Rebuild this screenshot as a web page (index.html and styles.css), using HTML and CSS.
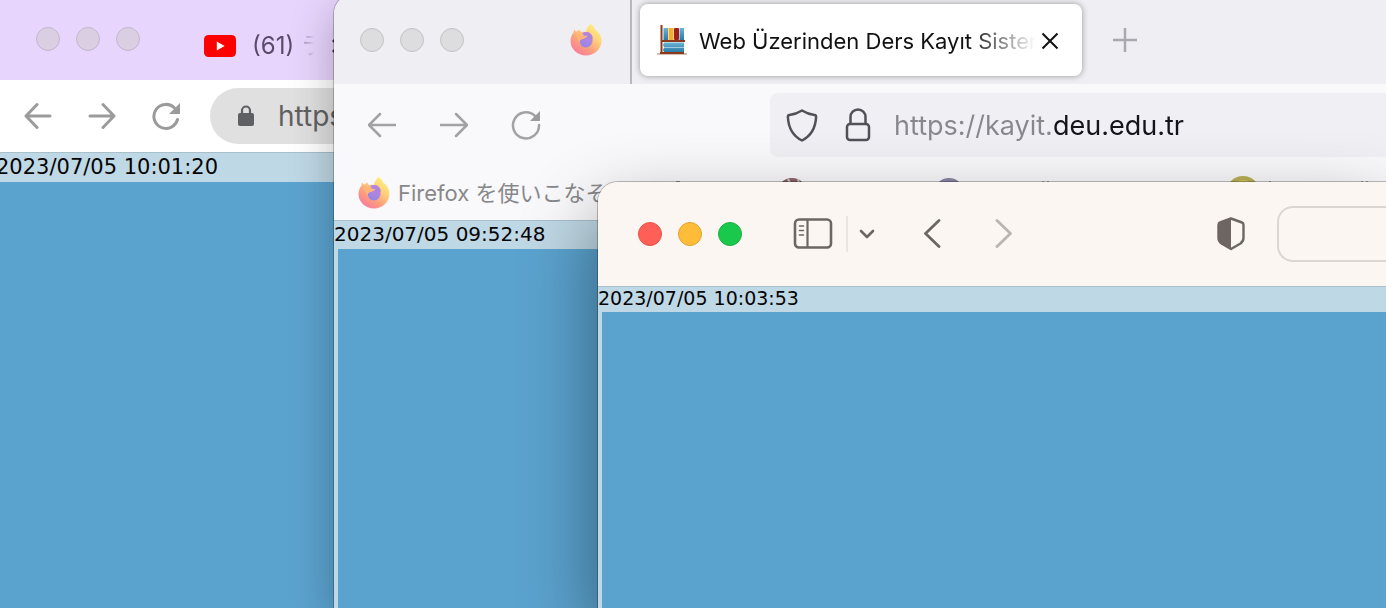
FILE: index.html
```html
<!DOCTYPE html>
<html lang="tr">
<head>
<meta charset="utf-8">
<title>Web Üzerinden Ders Kayıt Sistemi</title>
<link rel="stylesheet" href="styles.css">
</head>
<body>
<svg class="defs" aria-hidden="true">
  <defs>
    <linearGradient id="fox-body" x1="0.85" y1="0.05" x2="0.2" y2="0.95">
      <stop offset="0" stop-color="#fff27a"/>
      <stop offset="0.35" stop-color="#ffd07c"/>
      <stop offset="0.65" stop-color="#fda27c"/>
      <stop offset="1" stop-color="#f77a9c"/>
    </linearGradient>
    <linearGradient id="fox-globe" x1="0.7" y1="0" x2="0.3" y2="1">
      <stop offset="0" stop-color="#c483dd"/>
      <stop offset="1" stop-color="#8f87e4"/>
    </linearGradient>
    <linearGradient id="book-blue" x1="0" y1="0" x2="0" y2="1">
      <stop offset="0" stop-color="#6bb4d4"/>
      <stop offset="1" stop-color="#2b7ba6"/>
    </linearGradient>
    <symbol id="firefox" viewBox="0 0 32 32">
      <path fill="url(#fox-body)" d="M20.500 0c3 1.600 4 4 4.500 5.500 4 2.500 6.500 6.500 6.500 11C31.500 25 24.500 31.500 16 31.500S.5 25 .5 17c0-3.500 1.300-6.500 3-8.500.1-1.300.4-2.300 1-3 .6 1.300 1.200 1.900 1.800 2.200C7.500 6.800 8.500 6 9.500 5.600c.1 1 .6 1.800 1.500 2.400 1.500-.4 3.200-.4 4.800.1.600-3.100 2.300-5.900 4.700-8.100z"/>
      <circle fill="url(#fox-globe)" cx="16" cy="17" r="6.500"/>
      <path fill="url(#fox-globe)" d="M12 9.500c2.500-2 6.500-1.800 8.500 0 1.800 1.600 2.500 3.500 2 6l-5-2z"/>
      <path fill="#ffb678" d="M6 10.500c2.500-1 4.500-.6 6.500.8 1.500.6 3.200.7 5 .8-.4 1.400-2.300 1.900-3.300 2.400-.8.600-2.200.4-3.400 1.200-.8.600-1.400 1.600-1.400 3z"/>
    </symbol>
  </defs>
</svg>
<main class="desktop">

  <section class="window chrome" aria-label="Chrome">
    <header class="chrome-tabs">
      <div class="lights"><button class="light" aria-label="Close"></button><button class="light" aria-label="Minimize"></button><button class="light" aria-label="Zoom"></button></div>
      <div class="chrome-tab">
        <svg class="youtube" viewBox="0 0 32 22"><rect width="32" height="22" rx="4.500" fill="#f00"/><path d="M12.800 6.500v9l7.800-4.500z" fill="#fff"/></svg>
        <span class="chrome-title">(61) ラ</span>
        <button class="chrome-close" aria-label="Close tab"><svg width="14" height="14" viewBox="0 0 14 14"><path d="M1 1l12 12M13 1L1 13"/></svg></button>
      </div>
    </header>
    <nav class="chrome-toolbar">
      <button class="nav" aria-label="Back"><svg width="28" height="28" viewBox="0 0 28 28"><path d="M26 14H2M13 2.500L2 14l11 11.500"/></svg></button>
      <button class="nav" aria-label="Forward"><svg width="28" height="28" viewBox="0 0 28 28"><path d="M2 14h24M15 2.500L26 14 15 25.500"/></svg></button>
      <button class="nav" aria-label="Reload"><svg width="28" height="28" viewBox="0 0 28 28"><path d="M25.500 17.500A12 12 0 1 1 22.500 6"/><path class="fill" d="M28 1v11H17z"/></svg></button>
      <label class="omnibox">
        <svg width="16" height="22" viewBox="0 0 16 22"><path d="M4 9V5.500a4 4 0 0 1 8 0V9" fill="none" stroke="#5f6064" stroke-width="2.200"/><rect y="8" width="16" height="13" rx="2" fill="#5f6064"/></svg>
        <input type="text" value="https://" aria-label="Address">
      </label>
    </nav>
    <article class="page"><p class="stamp">2023/07/05 10:01:20</p><div class="pane"></div></article>
  </section>

  <section class="window firefox" aria-label="Firefox">
    <header class="ff-tabs">
      <div class="lights"><button class="light" aria-label="Close"></button><button class="light" aria-label="Minimize"></button><button class="light" aria-label="Zoom"></button></div>
      <svg class="fox ff-pinned"><use href="#firefox"/></svg>
      <div class="ff-tab">
        <svg class="books" width="30" height="32" viewBox="0 0 30 32">
          <path d="M0 29h30" stroke="#c9a893" stroke-width="1.500"/>
          <path d="M4.500 0v29M3 28h24M5 16h23" stroke="#8b3a1c" stroke-width="2" fill="none"/>
          <rect x="6.500" y="3" width="4.500" height="12" fill="url(#book-blue)"/>
          <rect x="11.500" y="3" width="5" height="12" fill="#f5ad2d"/>
          <rect x="17" y="3" width="5" height="12" rx="1" fill="#9e1f1c"/>
          <rect x="22.500" y="3" width="4.500" height="12" fill="url(#book-blue)"/>
          <path d="M7 17.500h20v4.500H7l-1-2zM7 22.500h20v4.500H7l-1-2z" fill="url(#book-blue)"/>
        </svg>
        <span class="ff-title">Web Üzerinden Ders Kayıt Sistemi</span>
        <button class="ff-close" aria-label="Close tab"><svg width="18" height="18" viewBox="0 0 18 18"><path d="M1.500 1.500l15 15M16.500 1.500l-15 15"/></svg></button>
      </div>
      <button class="ff-new" aria-label="New tab"><svg width="24" height="24" viewBox="0 0 24 24"><path d="M12 0v24M0 12h24"/></svg></button>
    </header>
    <nav class="ff-toolbar">
      <button class="nav" aria-label="Back"><svg width="28" height="28" viewBox="0 0 28 28"><path d="M27.500 14H1M12 3L1 14l11 11"/></svg></button>
      <button class="nav" aria-label="Forward"><svg width="28" height="28" viewBox="0 0 28 28"><path d="M.5 14H27M16 3l11 11-11 11"/></svg></button>
      <button class="nav" aria-label="Reload"><svg width="30" height="30" viewBox="0 0 30 30"><path d="M28 15A13 13 0 1 1 24 6"/><path class="fill" d="M29 1v10H19z"/></svg></button>
      <label class="ff-url">
        <svg width="32" height="34" viewBox="0 0 32 34"><path d="M16 2.500c4 2.500 8 4 12.500 4.500 1.400.2 1.700.8 1.600 2.200C29.500 20 25 28 16 32.500 7 28 2.500 20 1.900 9.200 1.800 7.800 2.100 7.200 3.500 7 8 6.500 12 5 16 2.500z"/></svg>
        <svg width="26" height="34" viewBox="0 0 26 34"><path d="M5.500 16V9a7.500 7.500 0 0 1 15 0v7"/><rect x="2" y="16" width="22" height="16" rx="3"/></svg>
        <input type="text" value="https://kayit.deu.edu.tr" aria-label="Address">
      </label>
    </nav>
    <div class="ff-bookmarks">
      <a class="ff-bookmark" href="#"><svg class="fox"><use href="#firefox"/></svg>Firefox を使いこなそう</a>
      <svg class="peek" width="724" height="36" viewBox="0 0 724 36">
        <path d="M-4 6.500h4M16 6.500h4" stroke="#9a999e" fill="none"/>
        <circle cx="132" cy="18" r="15" fill="#8d6269"/><path d="M128 4l2 4M138 4l1 4" stroke="#d3c4c6" stroke-width="2"/>
        <circle cx="289" cy="18" r="15" fill="#8d86a8"/>
        <circle cx="583" cy="18" r="17" fill="#b8b057"/><circle cx="583" cy="18" r="13" fill="#d0c866"/>
        <path d="M382 7h2M387 7h2M609 7h2M701 7h2M706 7h2" stroke="#66666b"/>
      </svg>
    </div>
    <article class="page"><p class="stamp">2023/07/05 09:52:48</p><div class="pane"></div></article>
  </section>

  <section class="window safari" aria-label="Safari">
    <nav class="sf-toolbar">
      <div class="lights"><button class="light red" aria-label="Close"></button><button class="light amber" aria-label="Minimize"></button><button class="light green" aria-label="Zoom"></button></div>
      <button class="sf-sidebar" aria-label="Sidebar"><svg width="40" height="32" viewBox="0 0 40 32"><rect x="2" y="1.500" width="36" height="28" rx="4" stroke-width="2.600"/><path d="M14.500 2v27" stroke-width="2.200"/><path d="M6.500 8h4M6.500 12.500h4M6.500 17h4" stroke-width="1.600"/></svg></button>
      <button class="sf-menu" aria-label="Tab groups"><svg width="16" height="10" viewBox="0 0 16 10"><path d="M2 2l6 6 6-6" stroke-width="2.600"/></svg></button>
      <button class="sf-back" aria-label="Back"><svg width="18" height="30" viewBox="0 0 18 30"><path d="M16 1.500L2.500 14.500 16 27.500" stroke-width="2.800"/></svg></button>
      <button class="sf-forward" aria-label="Forward"><svg width="18" height="30" viewBox="0 0 18 30"><path d="M2 1.500l13.500 13L2 27.500" stroke-width="2.800"/></svg></button>
      <button class="sf-privacy" aria-label="Privacy report"><svg width="28" height="34" viewBox="0 0 28 34"><path d="M14 1.500l11 4q1.500.5 1.500 2.500v13q0 3-3 5.500L14 32l-9.500-5.500q-3-2.500-3-5.500V8Q1.500 6 3 5.500z" stroke-width="2.400"/><path class="half" d="M14 1.500V32l-9.500-5.500q-3-2.500-3-5.500V8Q1.500 6 3 5.500z"/></svg></button>
      <input class="sf-url" type="text" aria-label="Address">
    </nav>
    <article class="page"><p class="stamp">2023/07/05 10:03:53</p><div class="pane"></div></article>
  </section>

</main>
</body>
</html>
```
FILE: styles.css
```css
* { box-sizing: border-box; }
body { margin: 0; font-family: Inter, "Noto Sans CJK JP", sans-serif; }
button { padding: 0; border: 0; background: none; display: flex; align-items: center; justify-content: center; flex: none; }
input { min-width: 0; border: 0; padding: 0; background: none; font: inherit; outline: 0; }
svg { display: block; flex: none; fill: none; }
.defs { position: absolute; width: 0; height: 0; }

.desktop { position: relative; height: 100vh; overflow: hidden; background: #5ba3cf; }
.window { position: absolute; right: 0; bottom: 0; display: flex; flex-direction: column; overflow: hidden; }
.chrome { left: 0; top: 0; }
.firefox { left: 334px; top: -6px; border-top-left-radius: 20px; box-shadow: 0 0 0 1px rgba(0,0,0,.22), 0 14px 44px rgba(0,0,0,.28); }
.safari { left: 598px; top: 182px; border-top-left-radius: 20px; box-shadow: 0 0 0 1px rgba(0,0,0,.25), 0 32px 76px rgba(0,0,0,.44); }

.lights { display: flex; gap: 16px; flex: none; }
.light { width: 24px; height: 24px; border-radius: 50%; background: #dddddf; border: 1px solid #c3c3c6; }
.chrome .light { background: #d9cee2; border-color: #c4b6cf; }
.light.red { background: #ff5f57; border-color: #e6514a; }
.light.amber { background: #febc38; border-color: #e3a42f; }
.light.green { background: #1ac84b; border-color: #17b143; }

.page { flex: 1; display: flex; flex-direction: column; background: #bfd8e5; border-top: 1px solid #a9bfca; color: #050505; font-family: "DejaVu Sans", Verdana, sans-serif; }
.stamp { margin: 0; white-space: nowrap; font-size: 20px; line-height: 28px; }
.pane { flex: 1; margin-left: 4px; background: #5ba3cf; }
.chrome .stamp { margin-left: -4px; font-size: 21px; line-height: 29px; }
.chrome .pane { margin-left: 0; }
.firefox .stamp { line-height: 26px; padding-bottom: 2px; }
.safari .stamp { font-size: 19px; line-height: 22px; padding-bottom: 3px; }

.nav svg { stroke: #9b9b9b; stroke-width: 3; stroke-linecap: round; stroke-linejoin: round; }
.nav .fill { fill: #9b9b9b; stroke: none; }

.chrome-tabs { height: 80px; flex: none; display: flex; align-items: center; gap: 64px; padding: 0 36px 2px; background: #e8d5fd; }
.chrome-tab { display: flex; align-items: center; gap: 16px; padding-top: 14px; color: #5c4a6b; }
.youtube { width: 32px; height: 22px; }
.chrome-title { width: 64px; overflow: hidden; white-space: nowrap; font-size: 24px; line-height: 30px; -webkit-mask-image: linear-gradient(90deg, #000 60%, transparent 98%); mask-image: linear-gradient(90deg, #000 60%, transparent 98%); }
.chrome-close svg { stroke: #43354f; stroke-width: 3; }
.chrome-toolbar { height: 72px; flex: none; display: flex; align-items: center; padding-left: 6px; background: #fff; }
.chrome-toolbar .nav { width: 64px; height: 56px; }
.omnibox { flex: 1; height: 56px; margin-left: 12px; padding-left: 28px; display: flex; align-items: center; gap: 24px; border-radius: 28px; background: #e0e0e0; }
.omnibox input { flex: 1; color: #616161; font-size: 28px; }

.ff-tabs { height: 90px; flex: none; display: flex; align-items: center; padding: 2px 0 0 26px; background: #efeef3; }
.fox { width: 32px; height: 32px; }
.ff-pinned { margin-left: 106px; }
.ff-tab { width: 442px; height: 72px; margin-left: 38px; padding: 2px 23px 0 17px; display: flex; align-items: center; position: relative; border-radius: 8px; background: #fff; box-shadow: 0 0 6px rgba(0,0,0,.38); }
.ff-tab::before { content: ""; position: absolute; left: -10px; top: -10px; width: 2px; height: 90px; background: #b9b8be; }
.ff-title { flex: 1; margin-left: 12px; overflow: hidden; white-space: nowrap; color: #111; font-size: 22px; line-height: 30px; -webkit-mask-image: linear-gradient(90deg, #000 80%, transparent 100%); mask-image: linear-gradient(90deg, #000 80%, transparent 100%); }
.ff-close { margin-left: 5px; }
.ff-close svg { stroke: #111; stroke-width: 2; }
.ff-new { margin-left: 31px; }
.ff-new svg { stroke: #aaa9ae; stroke-width: 2.500; }
.ff-toolbar { height: 82px; flex: none; display: flex; align-items: center; padding-left: 12px; background: #f9f9fb; }
.ff-toolbar .nav { width: 72px; height: 64px; }
.ff-toolbar .nav svg { stroke-width: 2.500; stroke: #a2a2a4; }
.ff-toolbar .nav .fill { stroke: none; }
.ff-url { flex: 1; height: 64px; margin-left: 208px; padding-left: 16px; display: flex; align-items: center; gap: 24px; border-radius: 8px 0 0 8px; background: #f0eff4; }
.ff-url svg { stroke: #515157; stroke-width: 2.500; stroke-linejoin: round; }
.ff-url svg + svg { margin-left: 3px; }
.ff-url input { flex: 1; margin-left: -1px; font-size: 27px; color: transparent; background: linear-gradient(90deg, #88878d 158px, #15141a 158px); -webkit-background-clip: text; background-clip: text; }
.ff-bookmarks { height: 54px; flex: none; display: flex; align-items: center; overflow: hidden; padding-left: 24px; background: #f9f9fb; }
.ff-bookmark { width: 302px; flex: none; display: flex; align-items: center; gap: 8px; white-space: nowrap; color: #88888b; font-size: 22px; line-height: 30px; text-decoration: none; }

.sf-toolbar { height: 104px; flex: none; display: flex; align-items: center; padding-left: 40px; background: #fcf6f2; }
.sf-toolbar svg { stroke: #6d6662; stroke-linecap: round; stroke-linejoin: round; }
.sf-sidebar { margin-left: 51px; }
.sf-menu { width: 40px; height: 36px; margin-left: 13px; border-left: 2px solid #ebe4e0; }
.sf-back { margin-left: 37px; }
.sf-forward { margin-left: 54px; }
.sf-forward svg { stroke: #bbb4b0; }
.sf-privacy { margin-left: 204px; }
.sf-privacy .half { fill: #6d6662; stroke: none; }
.sf-url { flex: 1; height: 56px; margin-left: 32px; border: 2px solid #dcd5d1; border-right: 0; border-radius: 16px 0 0 16px; }
```
